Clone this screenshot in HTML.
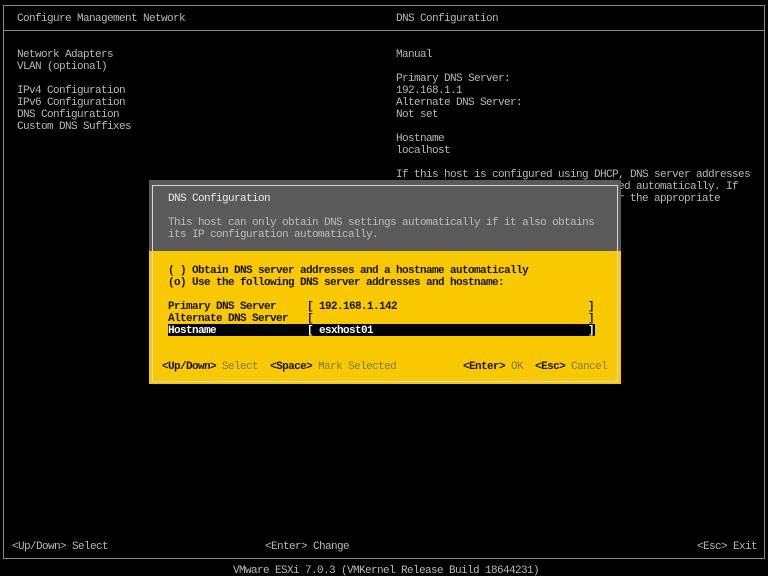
<!DOCTYPE html>
<html><head><meta charset="utf-8"><style>
html,body{margin:0;padding:0;background:#000;width:768px;height:576px;overflow:hidden}
body{position:relative;font-family:"Liberation Mono","DejaVu Sans Mono",monospace;font-size:11px;letter-spacing:-0.6px;color:#b8b8b8}
.t{position:absolute;white-space:pre;line-height:12px;height:12px}
.frame{position:absolute;left:3px;top:5px;width:760px;height:552px;border:1px solid #8a8a8a}
.sep{position:absolute;left:3px;top:30px;width:762px;height:1px;background:#8a8a8a}
.dlg{position:absolute;left:149px;top:180px;width:472px;height:204px;background:#f8c800}
.dlgtop{position:absolute;left:149px;top:180px;width:472px;height:71px;background:#5a5a5a}
.dlgb{position:absolute;left:152px;top:185px;width:464px;height:195px;border:1px solid #d8d8d8}
.k{color:#1a1400;font-weight:bold}
.l{color:#847a4c}
.hl{position:absolute;left:168px;top:324px;width:427px;height:12px;background:#000}
</style></head><body>
<div class="frame"></div>
<div class="sep"></div>
<div class="t" style="left:17px;top:13px">Configure Management Network</div>
<div class="t" style="left:396px;top:13px">DNS Configuration</div>
<div class="t" style="left:17px;top:49px">Network Adapters
VLAN (optional)

IPv4 Configuration
IPv6 Configuration
DNS Configuration
Custom DNS Suffixes</div>
<div class="t" style="left:396px;top:49px">Manual

Primary DNS Server:
192.168.1.1
Alternate DNS Server:
Not set

Hostname
localhost

If this host is configured using DHCP, DNS server addresses
                                    ned automatically. If
                                    or the appropriate</div>

<div class="dlg"></div>
<div class="dlgtop"></div>
<div class="dlgb"></div>
<div class="t" style="left:168px;top:193px;color:#e8e8e8">DNS Configuration</div>
<div class="t" style="left:168px;top:217px;color:#bcbcbc">This host can only obtain DNS settings automatically if it also obtains
its IP configuration automatically.</div>
<div class="t k" style="left:168px;top:265px">( ) Obtain DNS server addresses and a hostname automatically
(o) Use the following DNS server addresses and hostname:</div>
<div class="t k" style="left:168px;top:301px">Primary DNS Server</div>
<div class="t k" style="left:168px;top:313px">Alternate DNS Server</div>
<div class="hl"></div>
<div class="t" style="left:168px;top:325px;color:#fff;font-weight:bold">Hostname</div>
<div class="t k" style="left:307px;top:301px">[ 192.168.1.142</div>
<div class="t k" style="left:307px;top:313px">[</div>
<div class="t" style="left:307px;top:325px;color:#fff;font-weight:bold">[ esxhost01</div>
<div class="t k" style="left:588px;top:301px">]</div>
<div class="t k" style="left:588px;top:313px">]</div>
<div class="t" style="left:588px;top:325px;color:#fff;font-weight:bold">]</div>
<div class="t" style="left:162px;top:361px"><span class="k">&lt;Up/Down&gt;</span> <span class="l">Select</span>  <span class="k">&lt;Space&gt;</span> <span class="l">Mark Selected</span></div>
<div class="t" style="left:463px;top:361px"><span class="k">&lt;Enter&gt;</span> <span class="l">OK</span>  <span class="k">&lt;Esc&gt;</span> <span class="l">Cancel</span></div>

<div class="t" style="left:12px;top:541px">&lt;Up/Down&gt; Select</div>
<div class="t" style="left:265px;top:541px">&lt;Enter&gt; Change</div>
<div class="t" style="left:697px;top:541px">&lt;Esc&gt; Exit</div>
<div class="t" style="left:233px;top:565px">VMware ESXi 7.0.3 (VMKernel Release Build 18644231)</div>
</body></html>
